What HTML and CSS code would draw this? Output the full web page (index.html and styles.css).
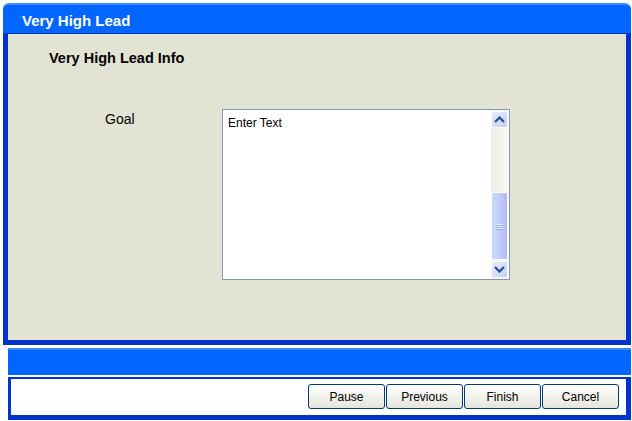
FILE: index.html
```html
<!DOCTYPE html>
<html lang="en">

<head>
    <meta charset="UTF-8">
    <title>Very High Lead</title>
    <link rel="stylesheet" href="styles.css">
</head>

<body>
    <section class="window">
        <header class="titlebar">Very High Lead</header>
        <main class="panel">
            <h1>Very High Lead Info</h1>
            <div class="row">
                <label for="goal">Goal</label>
                <div class="textbox">
                    <div class="text" id="goal">Enter Text</div>
                    <div class="scrollbar">
                        <div class="arrow up">
                            <svg width="11" height="7" viewBox="0 0 11 7"><path d="M1 6 L5.5 1.5 L10 6" fill="none" stroke="#2a4f8f" stroke-width="2.2"/></svg>
                        </div>
                        <div class="track">
                            <div class="thumb"><span></span><span></span><span></span></div>
                        </div>
                        <div class="arrow down">
                            <svg width="11" height="7" viewBox="0 0 11 7"><path d="M1 1 L5.5 5.5 L10 1" fill="none" stroke="#2a4f8f" stroke-width="2.2"/></svg>
                        </div>
                    </div>
                </div>
            </div>
        </main>
    </section>
    <div class="bottombar"></div>
    <footer class="buttons">
        <button>Pause</button>
        <button>Previous</button>
        <button>Finish</button>
        <button>Cancel</button>
    </footer>
</body>

</html>
```

FILE: styles.css
```css
* {
    box-sizing: border-box;
    padding: 0;
    margin: 0;
}

body {
    background: #fff;
    font-family: "Liberation Sans", Arial, sans-serif;
    width: 632px;
    height: 421px;
    overflow: hidden;
}

.window {
    margin: 3px 1px 0 3px;
}

.titlebar {
    height: 30px;
    background: #0066ff;
    border-top: 2px solid #3c8cff;
    border-radius: 6px 6px 0 0;
    color: #fff;
    font-weight: bold;
    font-size: 15px;
    line-height: 31px;
    padding-left: 19px;
}

.panel {
    height: 312px;
    background: #e3e3d3;
    border: 5px solid #0033cc;
    border-top: 1px solid #0036c8;
    padding: 16px 0 0 41px;
}

h1 {
    font-size: 14.5px;
    font-weight: bold;
    color: #000;
}

.row {
    display: flex;
    margin-top: 43px;
}

label {
    font-size: 14px;
    width: 173px;
    padding: 2px 0 0 56px;
}

.textbox {
    display: flex;
    width: 288px;
    height: 171px;
    background: #fff;
    border: 1px solid #7f9db9;
}

.text {
    flex: 1;
    font-size: 12px;
    padding: 6px 0 0 5px;
}

.scrollbar {
    width: 18px;
    padding: 1px 1px 1px 0;
    display: flex;
    flex-direction: column;
    background: linear-gradient(to right, #eeede5, #fbf9ef);
}

.arrow {
    height: 17px;
    display: flex;
    align-items: center;
    justify-content: center;
    border: 1px solid #fff;
    border-radius: 2px;
    background: linear-gradient(135deg, #e8eefe, #c4cdf7);
}

.track {
    flex: 1;
    display: flex;
    flex-direction: column;
    justify-content: flex-end;
}

.thumb {
    height: 68px;
    border: 1px solid #fff;
    border-radius: 2px;
    background: linear-gradient(to right, #c6dcfc, #c3c8f8 60%, #b3b8ef);
    display: flex;
    flex-direction: column;
    align-items: center;
    justify-content: center;
    gap: 1px;
    margin-bottom: 1px;
}

.thumb span {
    width: 7px;
    height: 1px;
    background: #eef3fe;
    box-shadow: 0 1px 0 #8caae6;
}

.bottombar {
    margin: 3px 1px 0 8px;
    height: 27px;
    background: #0066ff;
    border-top: 2px solid #3c8cff;
}

.buttons {
    margin: 2px 1px 0 8px;
    height: 43px;
    border: 5px solid #0033cc;
    border-left-width: 3px;
    border-top-width: 2px;
    display: flex;
    justify-content: flex-end;
    align-items: flex-start;
    padding: 5px 7px 0 0;
    gap: 1px;
}

button {
    width: 77px;
    height: 25px;
    font-family: "Liberation Sans", Arial, sans-serif;
    font-size: 12px;
    color: #000;
    border: 1px solid #003c74;
    border-radius: 3px;
    background: linear-gradient(#fff, #f0f0ea 60%, #e5e4dc);
}
```
